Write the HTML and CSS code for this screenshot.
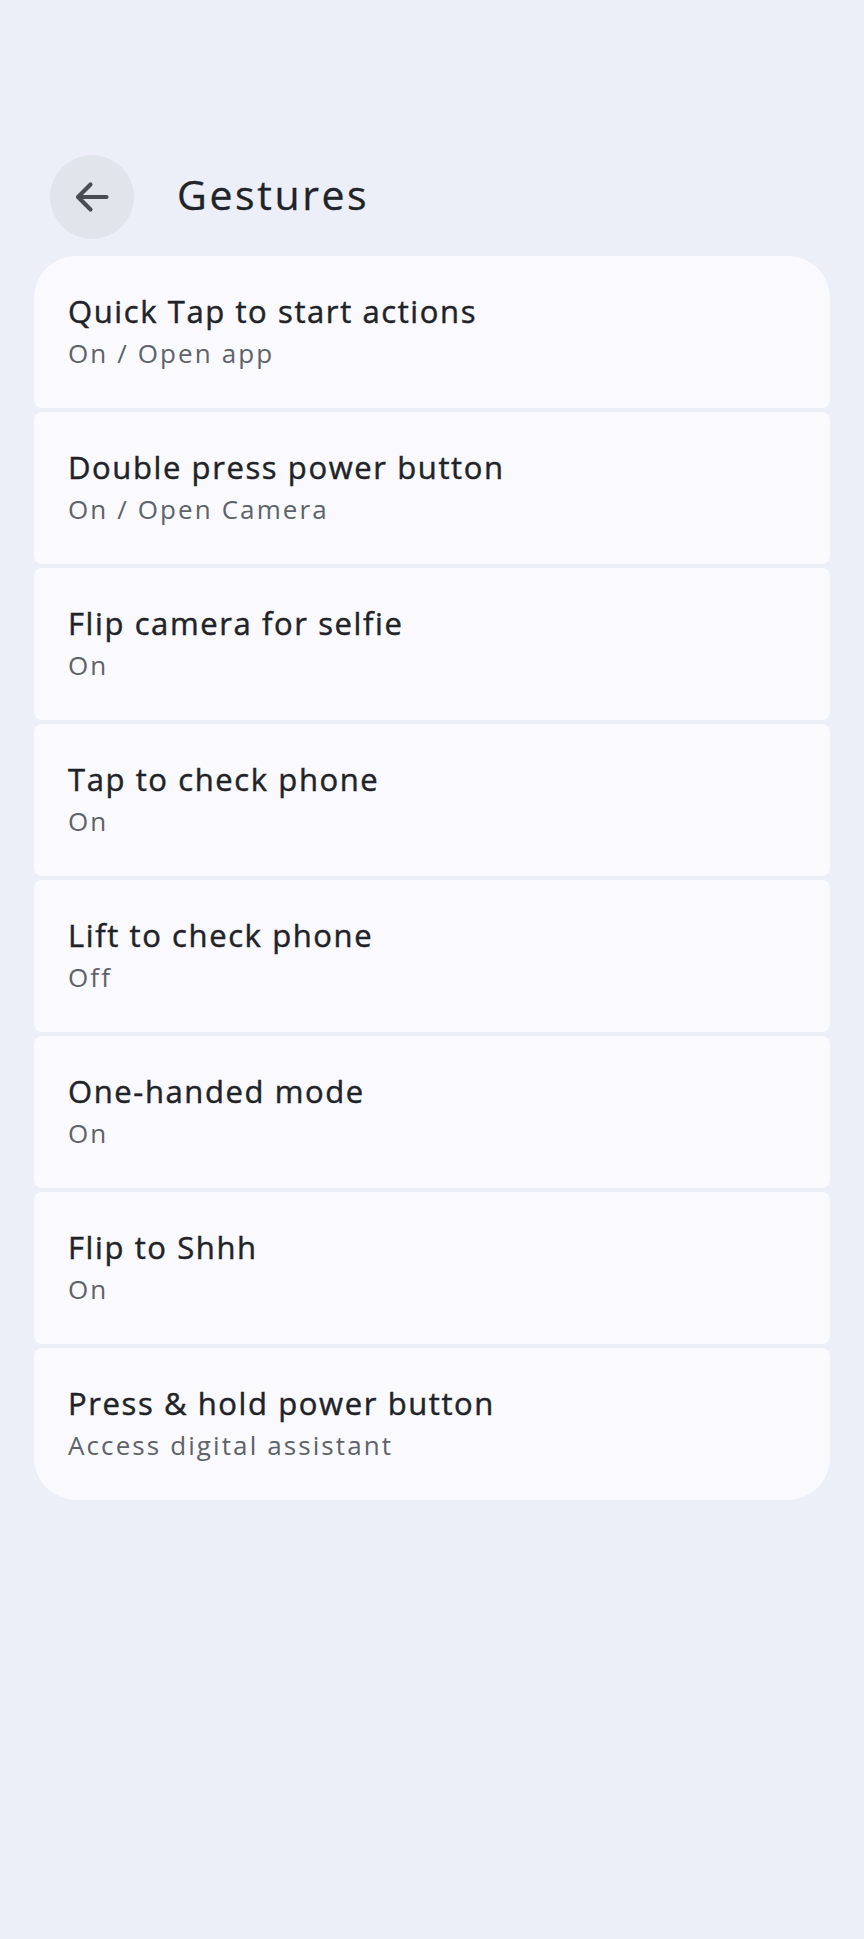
FILE: index.html
```html
<!DOCTYPE html>
<html lang="en">
<head>
<meta charset="utf-8">
<title>Gestures</title>
<link rel="stylesheet" href="styles.css">
</head>
<body>
<div class="page">
  <header class="header">
    <div class="back">
      <svg class="back-icon" viewBox="0 0 84 84" width="84" height="84" aria-hidden="true">
        <path d="M56.5 42 H28 M40.5 29.5 L28 42 L40.5 54.5" fill="none" stroke="#484c53" stroke-width="4.2" stroke-linecap="round" stroke-linejoin="round"/>
      </svg>
    </div>
    <h1 class="title">Gestures</h1>
  </header>
  <div class="list">
    <div class="item"><div class="item-title">Quick Tap to start actions</div><div class="item-sub">On / Open app</div></div>
    <div class="item"><div class="item-title">Double press power button</div><div class="item-sub">On / Open Camera</div></div>
    <div class="item"><div class="item-title">Flip camera for selfie</div><div class="item-sub">On</div></div>
    <div class="item"><div class="item-title">Tap to check phone</div><div class="item-sub">On</div></div>
    <div class="item"><div class="item-title">Lift to check phone</div><div class="item-sub">Off</div></div>
    <div class="item"><div class="item-title">One-handed mode</div><div class="item-sub">On</div></div>
    <div class="item"><div class="item-title">Flip to Shhh</div><div class="item-sub">On</div></div>
    <div class="item"><div class="item-title">Press &amp; hold power button</div><div class="item-sub">Access digital assistant</div></div>
  </div>
</div>
</body>
</html>
```

FILE: styles.css
```css
html, body {
  margin: 0;
  padding: 0;
}
body {
  background: #eceff7;
  font-family: "Open Sans", "Noto Sans", sans-serif;
  color: #1f2328;
  min-height: 1939px;
}
.page {
  padding: 155px 34px 0;
}
.header {
  display: flex;
  align-items: center;
  gap: 43px;
  height: 84px;
  padding-left: 16px;
  margin-bottom: 17px;
}
.back {
  width: 84px;
  height: 84px;
  border-radius: 50%;
  background: #e0e4eb;
  flex: none;
}
.back-icon {
  display: block;
}
.title {
  margin: 0 0 6px;
  font-size: 41px;
  font-weight: 400;
  line-height: 1;
  letter-spacing: 2.6px;
  color: #202329;
  -webkit-text-stroke: 0.3px #202329;
}
.list {
  display: flex;
  flex-direction: column;
  gap: 4px;
}
.item {
  background: #f9f9fe;
  border-radius: 8px;
  padding: 35px 34px 38px;
  height: 152px;
  box-sizing: border-box;
}
.item:first-child {
  border-top-left-radius: 42px;
  border-top-right-radius: 42px;
}
.item:last-child {
  border-bottom-left-radius: 42px;
  border-bottom-right-radius: 42px;
}
.item-title {
  font-size: 31px;
  font-weight: 500;
  line-height: 40px;
  letter-spacing: 1.6px;
  color: #1f2328;
  -webkit-text-stroke: 0.45px #1f2328;
}
.item-sub {
  margin-top: 5px;
  font-size: 26px;
  font-weight: 400;
  line-height: 34px;
  letter-spacing: 2.1px;
  color: #5e6269;
}
```
